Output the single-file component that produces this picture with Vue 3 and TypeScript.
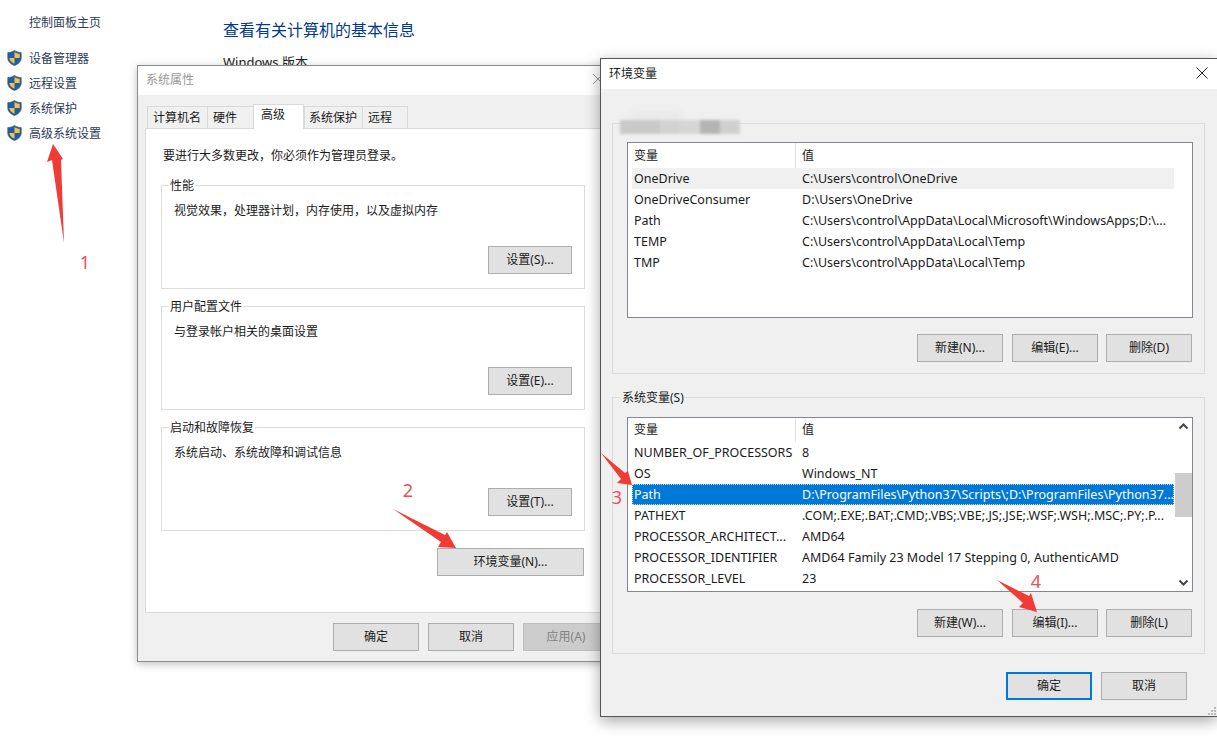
<script setup lang="ts">
interface Row { name: string; value: string; selected?: boolean; hover?: boolean }
interface Mark { points: string; label: string; x: number; y: number }

const navItems: string[] = ['设备管理器', '远程设置', '系统保护', '高级系统设置']
const tabs = [
  { label: '计算机名', w: 60, pad: 5 },
  { label: '硬件', w: 46, pad: 5 },
  { label: '高级', w: 51, pad: 7, active: true },
  { label: '系统保护', w: 58, pad: 4 },
  { label: '远程', w: 46, pad: 5 },
]
const groups = [
  { legend: '性能', text: '视觉效果，处理器计划，内存使用，以及虚拟内存', btn: '设置(S)...' },
  { legend: '用户配置文件', text: '与登录帐户相关的桌面设置', btn: '设置(E)...' },
  { legend: '启动和故障恢复', text: '系统启动、系统故障和调试信息', btn: '设置(T)...' },
]
const userRows: Row[] = [
  { name: 'OneDrive', value: 'C:\\Users\\control\\OneDrive', hover: true },
  { name: 'OneDriveConsumer', value: 'D:\\Users\\OneDrive' },
  { name: 'Path', value: 'C:\\Users\\control\\AppData\\Local\\Microsoft\\WindowsApps;D:\\...' },
  { name: 'TEMP', value: 'C:\\Users\\control\\AppData\\Local\\Temp' },
  { name: 'TMP', value: 'C:\\Users\\control\\AppData\\Local\\Temp' },
]
const sysRows: Row[] = [
  { name: 'NUMBER_OF_PROCESSORS', value: '8' },
  { name: 'OS', value: 'Windows_NT' },
  { name: 'Path', value: 'D:\\ProgramFiles\\Python37\\Scripts\\;D:\\ProgramFiles\\Python37...', selected: true },
  { name: 'PATHEXT', value: '.COM;.EXE;.BAT;.CMD;.VBS;.VBE;.JS;.JSE;.WSF;.WSH;.MSC;.PY;.P...' },
  { name: 'PROCESSOR_ARCHITECT...', value: 'AMD64' },
  { name: 'PROCESSOR_IDENTIFIER', value: 'AMD64 Family 23 Model 17 Stepping 0, AuthenticAMD' },
  { name: 'PROCESSOR_LEVEL', value: '23' },
]
const marks: Mark[] = [
  { points: '53,144 63,159 61,160 64,243 52,160 47,162', label: '1', x: 85, y: 262 },
  { points: '393,509 445,535 447,532 456,548 438,547 441,542', label: '2', x: 408, y: 490 },
  { points: '601,453 625,473 628,471 632,485 617,483 621,479', label: '3', x: 617, y: 497 },
  { points: '997,580 1029,596 1031,593 1037,612 1019,607 1023,603', label: '4', x: 1036, y: 581 },
]
const arrowPoints = marks.map((m) => m.points)
</script>

<template>
  <div class="screen">
    <aside class="side">
      <div class="home">控制面板主页</div>
      <div v-for="item in navItems" :key="item" class="nav">
        <svg class="shield" width="15" height="16" viewBox="0 0 15 16">
          <path d="M7.500 .5C5.500 2 3 2.600 .8 2.600V8c0 3.600 3 6.200 6.700 7.500 3.700-1.300 6.700-3.900 6.700-7.500V2.600C12 2.600 9.500 2 7.500 .5Z" fill="#1c5ea8" stroke="#46566a" stroke-width=".7" />
          <path d="M7.500 2v6h5.200V3.800C10.800 3.700 9 3.100 7.500 2ZM7.500 8H2.300c.3 2.700 2.600 4.700 5.200 5.800V8Z" fill="#f5c242" />
        </svg>
        <span>{{ item }}</span>
      </div>
    </aside>
    <main class="content">
      <h1>查看有关计算机的基本信息</h1>
      <p>Windows 版本</p>
    </main>

    <section class="win sys">
      <header class="sys-title">
        <span>系统属性</span>
        <svg class="sys-close" width="12" height="12" viewBox="0 0 12 12"><path d="M1 1l10 10M11 1 1 11" stroke="#999" fill="none" /></svg>
      </header>
      <div class="sys-body">
        <div class="tabs">
          <div
            v-for="t in tabs"
            :key="t.label"
            class="tab"
            :class="{ active: t.active }"
            :style="{ width: t.w + 'px', paddingLeft: t.pad + 'px' }"
          >{{ t.label }}</div>
        </div>
        <div class="panel">
          <div class="notice">要进行大多数更改，你必须作为管理员登录。</div>
          <div v-for="g in groups" :key="g.legend" class="group">
            <span class="legend">{{ g.legend }}</span>
            <div class="group-text">{{ g.text }}</div>
            <button class="btn set-btn">{{ g.btn }}</button>
          </div>
          <button class="btn env-btn">环境变量(N)...</button>
        </div>
        <div class="sys-foot">
          <button class="btn">确定</button>
          <button class="btn">取消</button>
          <button class="btn disabled">应用(A)</button>
        </div>
      </div>
    </section>

    <section class="win env">
      <header class="env-title">
        <span>环境变量</span>
        <svg width="12" height="12" viewBox="0 0 12 12"><path d="M.5.5l11 11M11.500.5l-11 11" stroke="#222" fill="none" /></svg>
      </header>
      <div class="env-body">
        <div class="env-group first">
          <div class="haze"></div>
          <div class="redact"><i></i><i class="mid"></i><i class="pale"></i><i class="dark"></i><i class="end"></i></div>
          <div class="list user-list">
            <div class="table">
              <div class="row head"><span>变量</span><span>值</span></div>
              <div v-for="r in userRows" :key="r.name" class="row" :class="{ hover: r.hover }">
                <span>{{ r.name }}</span><span>{{ r.value }}</span>
              </div>
            </div>
          </div>
          <div class="btn-row">
            <button class="btn">新建(N)...</button>
            <button class="btn">编辑(E)...</button>
            <button class="btn">删除(D)</button>
          </div>
        </div>
        <div class="env-group second">
          <span class="legend env-legend">系统变量(S)</span>
          <div class="list sys-list">
            <div class="table">
              <div class="row head"><span>变量</span><span>值</span></div>
              <div v-for="r in sysRows" :key="r.name" class="row" :class="{ selected: r.selected }">
                <span>{{ r.name }}</span><span>{{ r.value }}</span>
              </div>
            </div>
            <div class="scroll">
              <svg width="17" height="17" viewBox="0 0 17 17"><path d="M4.500 10.500 8.500 6.500l4 4" stroke="#444" stroke-width="2" fill="none" /></svg>
              <div class="thumb"></div>
              <svg class="down" width="17" height="17" viewBox="0 0 17 17"><path d="M4.500 6.500l4 4 4-4" stroke="#444" stroke-width="2" fill="none" /></svg>
            </div>
          </div>
          <div class="btn-row second-btns">
            <button class="btn">新建(W)...</button>
            <button class="btn">编辑(I)...</button>
            <button class="btn">删除(L)</button>
          </div>
        </div>
        <div class="env-foot">
          <button class="btn primary">确定</button>
          <button class="btn">取消</button>
        </div>
      </div>
      <svg class="grip" width="11" height="11" viewBox="0 0 11 11">
        <g fill="#bbb"><rect x="8" y="2" width="2" height="2" /><rect x="5" y="5" width="2" height="2" /><rect x="8" y="5" width="2" height="2" /><rect x="2" y="8" width="2" height="2" /><rect x="5" y="8" width="2" height="2" /><rect x="8" y="8" width="2" height="2" /></g>
      </svg>
    </section>

    <svg class="arrows" width="1217" height="736" viewBox="0 0 1217 736">
      <polygon v-for="p in arrowPoints" :key="p" :points="p" fill="#f03b36" />
    </svg>
    <span v-for="m in marks" :key="m.label" class="mark" :style="{ left: m.x + 'px', top: m.y + 'px' }">{{ m.label }}</span>
  </div>
</template>

<style>
html, body { margin: 0; background: #fff; }
</style>

<style scoped>
.screen {
  position: relative;
  width: 1217px;
  height: 736px;
  overflow: hidden;
  background: #fff;
  display: flex;
  font-family: "Noto Sans", "Noto Sans CJK SC", sans-serif;
  font-size: 12px;
  color: #1a1a1a;
}
.side { width: 223px; flex: none; padding-top: 14px; box-sizing: border-box; color: #2b3a55; }
.home { padding-left: 29px; line-height: 18px; margin-bottom: 13px; }
.nav { display: flex; align-items: center; height: 25px; padding-left: 7px; gap: 7px; }
.shield { flex: none; }
.content { flex: 1; padding-top: 19px; }
.content h1 { margin: 0; font-size: 16px; font-weight: 400; line-height: 22px; color: #003a8c; }
.content p { margin: 11px 0 0; font-size: 13px; line-height: 20px; color: #222; }

.win { position: absolute; box-sizing: border-box; display: flex; flex-direction: column; }
.sys {
  left: 137px; top: 65px; width: 478px; height: 597px;
  border: 1px solid #8c8c8c;
  background: #f0f0f0;
  box-shadow: 0 2px 8px rgba(0, 0, 0, .25);
}
.sys-title {
  height: 29px; flex: none; background: #fff; color: #999;
  display: flex; align-items: center; justify-content: space-between;
  padding: 0 10px 3px 8px; box-sizing: border-box;
}
.sys-body { flex: 1; display: flex; flex-direction: column; padding-left: 7px; }
.tabs { display: flex; align-items: flex-end; height: 33px; padding-left: 2px; box-sizing: border-box; flex: none; }
.tab {
  height: 22px; box-sizing: border-box; flex: none;
  border: 1px solid #d9d9d9; border-bottom: 0; border-right-width: 0;
  background: #f0f0f0; line-height: 22px; white-space: nowrap;
}
.tab:last-child { border-right-width: 1px; }
.tab.active {
  background: #fff; line-height: 20px; position: relative; margin-bottom: -1px; height: 25px;
  border-right-width: 1px;
}
.panel {
  height: 485px; box-sizing: border-box; flex: none;
  background: #fff; border: 1px solid #d9d9d9;
  padding: 17px 20px 0 15px;
  display: flex; flex-direction: column;
}
.notice { line-height: 20px; height: 20px; padding-left: 2px; margin-bottom: 19px; }
.group {
  position: relative; flex: none; width: 424px; height: 104px; box-sizing: border-box;
  border: 1px solid #dcdcdc; margin-bottom: 17px;
  display: flex; flex-direction: column; padding: 16px 12px 14px 12px;
}
.legend {
  position: absolute; left: 7px; top: -8px; background: #fff; padding: 0 1px; line-height: 16px;
}
.group-text { line-height: 18px; }
.btn {
  font: inherit; color: #1a1a1a; width: 86px; height: 28px; box-sizing: border-box; flex: none;
  background: #e1e1e1; border: 1px solid #adadad; padding: 0 0 2px;
}
.set-btn { margin-top: auto; align-self: flex-end; width: 84px; }
.env-btn { width: 147px; margin-left: 276px; }
.disabled { background: #ccc; border-color: #bfbfbf; color: #838383; }
.sys-foot { display: flex; justify-content: flex-end; gap: 9px; padding-top: 10px; padding-right: 5px; }

.env {
  left: 600px; top: 58px; width: 617px; height: 659px;
  border: 1px solid #555; border-right: 0;
  background: #f0f0f0;
  box-shadow: 0 4px 14px rgba(0, 0, 0, .35);
}
.env-title {
  height: 30px; flex: none; background: #fff; color: #1a1a1a;
  display: flex; align-items: center; justify-content: space-between;
  padding: 0 9px 2px 8px; box-sizing: border-box;
}
.env-body { flex: 1; display: flex; flex-direction: column; padding: 34px 12px 0 11px; }
.env-group {
  position: relative; box-sizing: border-box; width: 593px; flex: none;
  border: 1px solid #dcdcdc; padding-left: 14px;
}
.env-group.first { height: 251px; padding-top: 18px; margin-bottom: 23px; }
.env-group.second { height: 257px; padding-top: 19px; }
.env-legend { background: #f0f0f0; left: 8px; }
.haze { position: absolute; left: 18px; top: -14px; width: 50px; height: 12px; background: #eaeaea; filter: blur(2px); }
.redact { position: absolute; left: 7px; top: -4px; display: flex; filter: blur(1.5px); }
.redact i { display: block; width: 40px; height: 14px; background: #c9c9c9; }
.redact i.mid { width: 20px; background: #d2d2d2; }
.redact i.pale { width: 20px; background: #d6d6d6; }
.redact i.dark { background: #b4b4b4; width: 20px; }
.redact i.end { background: #d0d0d0; width: 20px; }
.list {
  width: 566px; box-sizing: border-box; background: #fff; border: 1px solid #828790; display: flex;
}
.user-list { height: 176px; }
.sys-list { height: 175px; }
.table { width: 547px; flex: none; padding: 0 1px 0 4px; box-sizing: border-box; }
.row {
  display: grid; grid-template-columns: 168px 1fr; height: 21px; line-height: 21px; padding-left: 2px;
  box-sizing: border-box; white-space: nowrap; overflow: hidden; font-size: 12.5px;
}
.row span { overflow: hidden; }
.row.head { height: 25px; line-height: 25px; font-size: 12px; }
.sys-list .row.head { height: 24px; line-height: 24px; }
.row.head span + span { border-left: 1px solid #e5e5e5; margin-left: -7px; padding-left: 6px; }
.row.hover { background: #f0f0f0; }
.row.selected { background: #0078d7; color: #fff; outline: 1px dotted #cfe3f5; outline-offset: -1px; }
.scroll { flex: 1; display: flex; flex-direction: column; background: #fff; }
.thumb { height: 44px; margin-top: 38px; background: #cdcdcd; }
.down { margin-top: auto; }
.btn-row { display: flex; gap: 9px; justify-content: flex-end; width: 565px; margin-top: 16px; }
.btn-row .btn:last-child { margin-left: -1px; }
.second-btns { margin-top: 17px; }
.env-foot { display: flex; justify-content: flex-end; gap: 9px; margin-top: 18px; padding-right: 18px; }
.primary { border: 2px solid #0078d7; padding: 0 0 2px; }
.grip { position: absolute; right: 0; bottom: 0; }

.arrows { position: absolute; left: 0; top: 0; pointer-events: none; }
.mark {
  position: absolute; transform: translate(-50%, -50%);
  font-size: 18px; line-height: 20px; color: #e8505a;
}
</style>
